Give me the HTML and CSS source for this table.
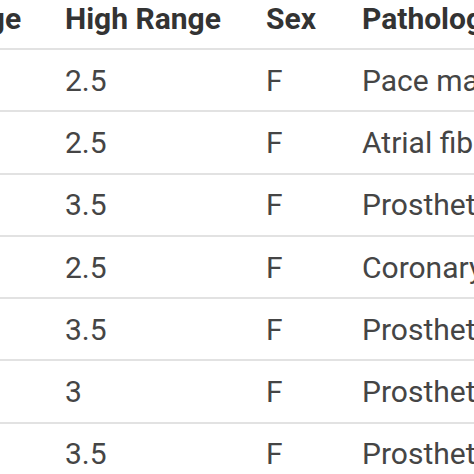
FILE: index.html
```html
<!DOCTYPE html>
<html>
<head>
<meta charset="utf-8">
<link rel="stylesheet" href="styles.css">
</head>
<body>
<table class="data">
  <colgroup>
    <col class="c-low"><col class="c-high"><col class="c-sex"><col class="c-path">
  </colgroup>
  <thead>
    <tr><th>Low Range</th><th>High Range</th><th>Sex</th><th>Pathology</th></tr>
  </thead>
  <tbody>
    <tr><td>1.5</td><td>2.5</td><td>F</td><td>Pace maker</td></tr>
    <tr><td>1.5</td><td>2.5</td><td>F</td><td>Atrial fibrillation</td></tr>
    <tr><td>2.5</td><td>3.5</td><td>F</td><td>Prosthetic valve</td></tr>
    <tr><td>1.5</td><td>2.5</td><td>F</td><td>Coronary disease</td></tr>
    <tr><td>2.5</td><td>3.5</td><td>F</td><td>Prosthetic valve</td></tr>
    <tr><td>2</td><td>3</td><td>F</td><td>Prosthetic valve</td></tr>
    <tr><td>2.5</td><td>3.5</td><td>F</td><td>Prosthetic valve</td></tr>
  </tbody>
</table>
</body>
</html>
```

FILE: styles.css
```css
html, body {
  margin: 0;
  padding: 0;
  background: #ffffff;
  overflow: hidden;
}

body {
  width: 474px;
  height: 474px;
  font-family: Roboto, "Noto Sans", sans-serif;
}

.data {
  border-collapse: collapse;
  table-layout: fixed;
  width: 900px;
  margin-left: -143px;
  margin-top: -12px;
  white-space: nowrap;
}

.c-low { width: 192px; }
.c-high { width: 201px; }
.c-sex { width: 96px; }
.c-path { width: 411px; }

.data th,
.data td {
  text-align: left;
  padding: 0 16px;
  border-bottom: 2px solid #e2e2e2;
  vertical-align: middle;
  overflow: hidden;
}

.data th {
  height: 60px;
  font-size: 30px;
  font-weight: 700;
  color: #333333;
}

.data td {
  height: 60.3px;
  font-size: 30px;
  font-weight: 400;
  color: #454545;
}
```
